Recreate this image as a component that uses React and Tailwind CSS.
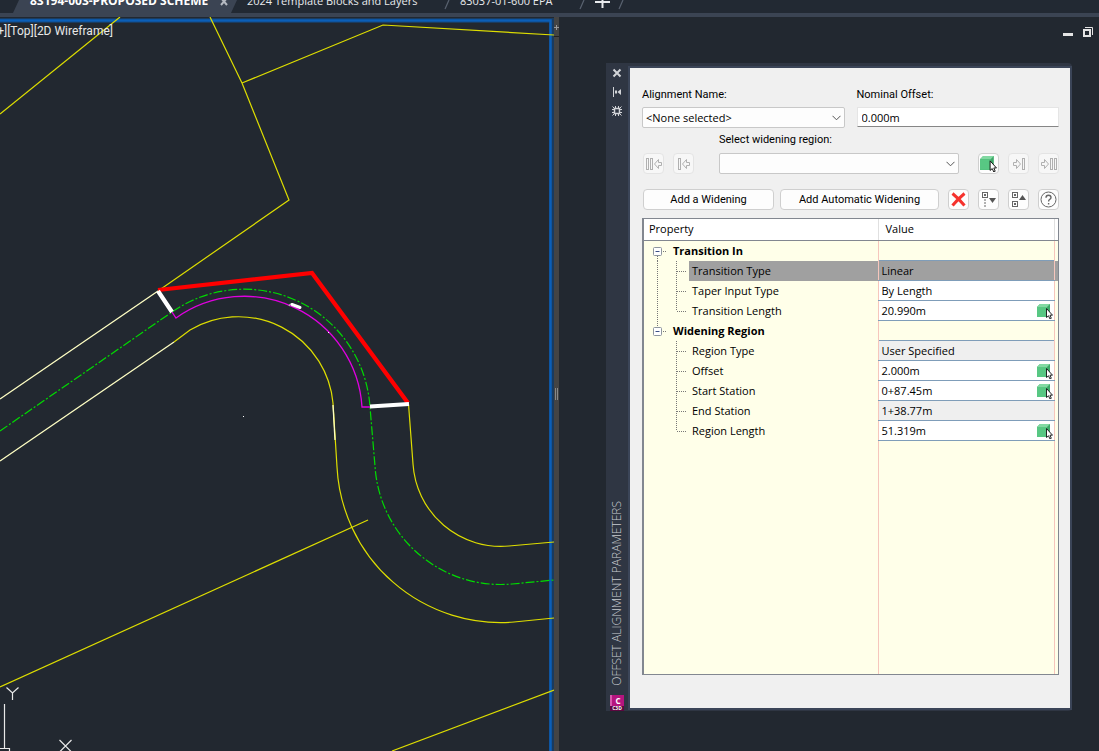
import React from "react";

const FONT = "font-['Open_Sans','Noto_Sans',sans-serif]";

function PickIcon({ className = "h-4 w-4" }) {
  return (
    <svg className={className} viewBox="0 0 16 16" aria-hidden="true">
      <path d="M0 4 L3 1 H13 V12 L10 14 H0 Z" fill="#3ea869" />
      <path d="M0 4 L3 1 H13 L10 4 Z" fill="#82d9a2" />
      <path d="M0 4 H10 V14 H0 Z" fill="#58c783" />
      <path
        d="M9.5 5.5 V14.5 L11.5 12.8 L13 16 L14.3 15.3 L13 12.2 H15.5 Z"
        fill="#fff"
        stroke="#111"
        strokeWidth="0.9"
      />
    </svg>
  );
}

function StepIcon({ bars = 1, flip = false }) {
  return (
    <svg
      className={flip ? "h-4 w-[18px] shrink-0 -scale-x-100" : "h-4 w-[18px] shrink-0"}
      viewBox="0 0 18 16"
      fill="none"
      stroke="#b0b0b0"
      aria-hidden="true"
    >
      {bars === 2 && <rect x="1.5" y="2.5" width="2" height="11" />}
      <rect x={bars === 2 ? 5.5 : 3.5} y="2.5" width="2" height="11" />
      <path
        d={
          bars === 2
            ? "M9.5 8 L13.5 3.5 V6.5 H16.5 V9.5 H13.5 V12.5 Z"
            : "M7.5 8 L11.5 3.5 V6.5 H14.5 V9.5 H11.5 V12.5 Z"
        }
      />
    </svg>
  );
}

function IconButton({ label, disabled, children }) {
  return (
    <button
      type="button"
      aria-label={label}
      disabled={disabled}
      className={
        disabled
          ? "flex h-[21px] w-[21px] shrink-0 items-center justify-center rounded border border-[#e4e4e4] bg-[#f7f7f7]"
          : "flex h-[21px] w-[21px] shrink-0 items-center justify-center rounded border border-[#cfcfcf] bg-[#fdfdfd]"
      }
    >
      {children}
    </button>
  );
}

function SelectBox({ id, options }) {
  return (
    <div className="relative flex-1">
      <select
        id={id}
        className="h-[21px] w-full appearance-none rounded-[2px] border border-[#c8c8c8] bg-[#fdfdfd] px-[3px] text-[11px] leading-4 text-black"
      >
        {options.map((o) => (
          <option key={o}>{o}</option>
        ))}
      </select>
      <svg
        className="pointer-events-none absolute top-2 right-1 h-[6px] w-[9px]"
        viewBox="0 0 9 6"
        fill="none"
        stroke="#555"
        aria-hidden="true"
      >
        <path d="M0.5 0.8 L4.5 4.8 L8.5 0.8" />
      </svg>
    </div>
  );
}

const rows = [
  { group: "Transition In", first: true },
  { name: "Transition Type", value: "Linear", selected: true },
  { name: "Taper Input Type", value: "By Length" },
  { name: "Transition Length", value: "20.990m", pick: true, last: true },
  { group: "Widening Region" },
  { name: "Region Type", value: "User Specified", locked: true, tail: true },
  { name: "Offset", value: "2.000m", pick: true, tail: true },
  { name: "Start Station", value: "0+87.45m", pick: true, tail: true },
  { name: "End Station", value: "1+38.77m", locked: true, tail: true },
  { name: "Region Length", value: "51.319m", pick: true, last: true, tail: true },
];

function TreeLines({ row }) {
  return (
    <svg
      className={row.group ? "h-5 w-[29px] shrink-0" : "h-5 w-[45px] shrink-0"}
      viewBox={row.group ? "0 0 29 20" : "0 0 45 20"}
      fill="none"
      stroke="#777"
      strokeDasharray="1 1"
      aria-hidden="true"
    >
      {row.group ? (
        <>
          {row.first ? <path d="M13.5 15 V20" /> : <path d="M13.5 0 V6" />}
          <path d="M19 10.5 H22" />
          <rect x="9.5" y="6.5" width="8" height="8" rx="1" fill="#fff" stroke="#8d959f" strokeDasharray="none" />
          <path d="M11.5 10.5 H15.5" stroke="#3b4f86" strokeDasharray="none" />
        </>
      ) : (
        <>
          {!row.tail && <path d="M13.5 0 V20" />}
          <path d={row.last ? "M32.5 0 V10" : "M32.5 0 V20"} />
          <path d="M33 10.5 H42" />
        </>
      )}
    </svg>
  );
}

function valueClass(row) {
  if (row.selected) return "border-y border-y-[#7f9db9] bg-[#a0a0a0]";
  if (row.locked) return "border-y border-y-[#7f9db9] bg-[#efefef]";
  return "border-y border-y-[#7f9db9] bg-white";
}

function PropertyTable() {
  return (
    <div className="flex flex-1 flex-col border border-l-2 border-[#828790] bg-[#ffffe9]">
      <table className="h-full w-full table-fixed border-collapse text-[11px] leading-4 text-black">
        <colgroup>
          <col />
          <col className="w-[176px]" />
          <col className="w-1" />
        </colgroup>
        <thead>
          <tr className="h-[21px] bg-white text-left">
            <th scope="col" className="border-b border-[#828790] px-[5px] font-normal">Property</th>
            <th scope="col" className="border-b border-l border-b-[#828790] border-l-[#e0e0e0] px-[7px] font-normal">Value</th>
            <td className="border-b border-l border-b-[#828790] border-l-[#e0e0e0]"></td>
          </tr>
        </thead>
        <tbody>
          {rows.map((row) => (
            <tr key={row.group || row.name} className="h-5">
              <th scope="row" className={row.group ? "p-0 text-left font-bold" : "p-0 text-left font-normal"}>
                <div className="flex h-5 items-stretch">
                  <TreeLines row={row} />
                  <span className={row.selected ? "flex flex-1 items-center bg-[#a0a0a0] pl-[3px]" : row.group ? "flex items-center" : "flex items-center pl-[3px]"}>
                    {row.group || row.name}
                  </span>
                </div>
              </th>
              {row.group ? (
                <td className="border-x border-x-[#f6c6bd] p-0"></td>
              ) : (
                <td className={"border-x border-x-[#f6c6bd] p-0 " + valueClass(row)}>
                  <div className="flex items-center justify-between pl-[3px] pr-px">
                    <span>{row.value}</span>
                    {row.pick && (
                      <button type="button" aria-label={"Pick " + row.name}>
                        <PickIcon />
                      </button>
                    )}
                  </div>
                </td>
              )}
              <td className={row.selected ? "bg-[#a0a0a0] p-0" : "p-0"}></td>
            </tr>
          ))}
          <tr>
            <td></td>
            <td className="border-x border-x-[#f6c6bd]"></td>
            <td></td>
          </tr>
        </tbody>
      </table>
    </div>
  );
}

function Drawing() {
  return (
    <svg className="block h-full w-full" fill="none" role="img" aria-label="Road alignment plan">
      <g transform="translate(0 -17)">
        <g stroke="#0b5fb8">
          <path d="M0 20.5 H551.5 V760" strokeWidth="5" opacity="0.35" />
          <path d="M0 20.5 H550.5 V760" strokeWidth="2.5" />
        </g>
        <g stroke="#dede00" strokeWidth="1.2">
          <path d="M120 17 L0 114" />
          <path d="M210 17 L242 83 L289 200 L158 291" />
          <path d="M242 83 L383 25 L554 35" />
          <path d="M174 342 L190 330 A95 95 0 0 1 333 403 L337 467 A164 164 0 0 0 514 622 L554 618" />
          <path d="M408.5 404 L413 464 A88 88 0 0 0 509 546 L554 542" />
          <path d="M0 687 L368 520" />
          <path d="M392 751 L554 690" />
        </g>
        <g stroke="#ffffc4" strokeWidth="1.3">
          <path d="M0 399 L158 291" />
          <path d="M0 461 L174 342" />
          <path d="M333 405 L335 440" />
        </g>
        <path
          d="M0 431 L172 312 A126 126 0 0 1 370 407 L375 466 A126 126 0 0 0 512 584 L554 580"
          stroke="#00dc00"
          strokeWidth="1.2"
          strokeDasharray="9 2 2 2"
        />
        <path d="M172 312 L176 318 A118 118 0 0 1 362 407 H370" stroke="#e000e0" strokeWidth="1.3" />
        <path d="M158 290 L312 273 L408 403" stroke="#fe0000" strokeWidth="4.2" />
        <path d="M158 291 L172 312 M370 406.5 L409 404" stroke="#fff" strokeWidth="4.2" />
        <path d="M289 306 Q290 303 293 304" stroke="#bbb" strokeWidth="1.2" />
        <path d="M292 304.5 L300 307.5" stroke="#fff" strokeWidth="3" strokeLinecap="round" />
        <path d="M243 416.5 H244 M328 332.5 H329" stroke="#fff" />
        <g stroke="#e8e8e8" strokeWidth="1.2">
          <path d="M4.5 704 V748 M0 748.5 H9.5 V752" />
          <path d="M6.5 687.5 L12.5 693 L18.5 687.5 M12.5 693 V700" />
          <path d="M59.5 740 L71.5 752 M71.5 740 L59.5 752" />
        </g>
      </g>
    </svg>
  );
}

function TabDivider() {
  return (
    <svg className="h-[13px] w-2 shrink-0" viewBox="0 0 8 13" aria-hidden="true">
      <path d="M1 9 L5 0" stroke="#5a6371" strokeWidth="1.2" />
    </svg>
  );
}

function FileTabs() {
  return (
    <nav className="flex h-[17px] shrink-0 items-start overflow-hidden border-b-4 border-[#3b4453] bg-[#222933] text-[11px] leading-4 whitespace-nowrap text-[#e8eaed]">
      <svg className="h-[13px] w-5 shrink-0" viewBox="0 0 20 13" aria-hidden="true">
        <path d="M13 13 L19 0 H20 V13 Z" fill="#3b4453" />
      </svg>
      <div className="flex h-[13px] w-[210px] shrink-0 items-end gap-3 bg-[#3b4453] pl-[10px]">
        <a href="#scheme" className="mb-1 text-[12px] font-bold text-white">83194-003-PROPOSED SCHEME</a>
        <button type="button" aria-label="Close tab" className="mb-[7px]">
          <svg className="h-2 w-2" viewBox="0 0 8 8" stroke="#b5bac2" strokeWidth="2" aria-hidden="true">
            <path d="M1 0 L7 7 M7 0 L1 7" />
          </svg>
        </button>
      </div>
      <svg className="h-[13px] w-[17px] shrink-0" viewBox="0 0 17 13" aria-hidden="true">
        <path d="M0 0 H7 L1 13 H0 Z" fill="#3b4453" />
      </svg>
      <div className="flex h-[13px] w-[197px] shrink-0 items-end">
        <a href="#template" className="mb-1">2024 Template Blocks and Layers</a>
      </div>
      <TabDivider />
      <div className="flex h-[13px] w-[127px] shrink-0 items-end pl-2">
        <a href="#epa" className="mb-1">83037-01-600 EPA</a>
      </div>
      <TabDivider />
      <button type="button" aria-label="New tab" className="mx-2 shrink-0">
        <svg className="h-[13px] w-[15px]" viewBox="0 0 15 13" stroke="#e8eaed" strokeWidth="2" aria-hidden="true">
          <path d="M0 2 H15 M7.5 0 V8" />
        </svg>
      </button>
      <TabDivider />
    </nav>
  );
}

function PaletteBar() {
  return (
    <div className="flex w-[22px] shrink-0 flex-col items-center bg-[#2f3643] pt-[5px]">
      <div className="flex flex-1 flex-col items-center gap-[9px]">
        <button type="button" aria-label="Close palette">
          <svg className="h-[10px] w-[10px]" viewBox="0 0 10 10" stroke="#d2d4d8" strokeWidth="2" aria-hidden="true">
            <path d="M1.5 1.5 L8.5 8.5 M8.5 1.5 L1.5 8.5" />
          </svg>
        </button>
        <button type="button" aria-label="Auto-hide">
          <svg className="h-[10px] w-[10px]" viewBox="0 0 10 10" fill="#d2d4d8" aria-hidden="true">
            <path d="M1 0 H2 V10 H1 Z M3 3.5 H5 V6.5 H3 Z M9 2 V8 L5.5 5 Z" />
          </svg>
        </button>
        <button type="button" aria-label="Palette settings">
          <svg className="h-[10px] w-[10px]" viewBox="0 0 10 10" fill="none" stroke="#d2d4d8" strokeWidth="1.5" aria-hidden="true">
            <rect x="2.5" y="2.5" width="5" height="5" />
            <path d="M3.5 0 V2 M6.5 0 V2 M3.5 8 V10 M6.5 8 V10 M0 3.5 H2 M0 6.5 H2 M8 3.5 H10 M8 6.5 H10 M0.5 0.5 L2.5 2.5 M9.5 0.5 L7.5 2.5 M0.5 9.5 L2.5 7.5 M9.5 9.5 L7.5 7.5" strokeWidth="1" />
          </svg>
        </button>
      </div>
      <h2 className="rotate-180 text-[12px] leading-4 font-light whitespace-nowrap text-[#c9ccd1] [writing-mode:vertical-rl]">
        OFFSET ALIGNMENT PARAMETERS
      </h2>
      <div className="mt-[9px] flex h-4 w-[14px] flex-col items-center border-l-2 border-[#d658ad] bg-[#b5157f]">
        <span className="text-[8px] leading-[11px] font-bold text-white">C</span>
        <span className="-ml-[2px] w-[14px] bg-[#5d0740] text-center text-[5px] leading-[5px] font-bold text-white">C3D</span>
      </div>
    </div>
  );
}

function Palette() {
  return (
    <section className="flex h-[648px] w-[466px] rounded-sm bg-[#2f3643]">
      <PaletteBar />
      <div className="mt-[3px] mb-px flex flex-1 flex-col border-2 border-[#3b4558] bg-[#f0f0f0] pr-[11px] pb-[33px] pl-3 text-[11px] leading-4 text-black">
        <div className="flex gap-3 pt-[19px]">
          <div className="flex flex-1 flex-col gap-1">
            <label htmlFor="alignment-name" className="font-[Roboto,sans-serif]">Alignment Name:</label>
            <SelectBox id="alignment-name" options={["<None selected>"]} />
          </div>
          <div className="flex flex-1 flex-col gap-1">
            <label htmlFor="nominal-offset" className="font-[Roboto,sans-serif]">Nominal Offset:</label>
            <input
              id="nominal-offset"
              defaultValue="0.000m"
              className="h-5 w-full rounded-[1px] border border-[#e5e5e5] border-b-[#868686] bg-white px-1 text-[11px] leading-4"
            />
          </div>
        </div>
        <label htmlFor="region" className="mt-1 ml-[77px] font-[Roboto,sans-serif]">Select widening region:</label>
        <div className="mt-[5px] flex items-center gap-[9px] pl-px">
          <IconButton label="First region" disabled><StepIcon bars={2} /></IconButton>
          <IconButton label="Previous region" disabled><StepIcon /></IconButton>
          <div className="mr-[10px] ml-4 flex flex-1">
            <SelectBox id="region" options={[""]} />
          </div>
          <IconButton label="Pick region"><PickIcon className="h-[17px] w-[17px] shrink-0" /></IconButton>
          <IconButton label="Next region" disabled><StepIcon flip /></IconButton>
          <IconButton label="Last region" disabled><StepIcon bars={2} flip /></IconButton>
        </div>
        <div className="mt-[15px] flex items-center gap-[9px] pl-px">
          <div className="flex flex-1 gap-[6px] font-[Roboto,sans-serif]">
            <button type="button" className="h-[21px] w-[131px] rounded border border-[#cfcfcf] bg-[#fdfdfd]">Add a Widening</button>
            <button type="button" className="h-[21px] flex-1 rounded border border-[#cfcfcf] bg-[#fdfdfd]">Add Automatic Widening</button>
          </div>
          <IconButton label="Delete">
            <svg className="h-[15px] w-[15px] shrink-0" viewBox="0 0 15 15" stroke="#f5322d" strokeWidth="3" aria-hidden="true">
              <path d="M1.5 1.5 Q7 6 13.5 13.5 M13.5 1.5 Q8 6 1.5 13.5" fill="none" />
            </svg>
          </IconButton>
          <IconButton label="Collapse all">
            <svg className="h-[17px] w-[17px] shrink-0" viewBox="0 0 17 17" fill="none" stroke="#666" aria-hidden="true">
              <rect x="2.5" y="1.5" width="5" height="5" />
              <path d="M4 4 H6" strokeWidth="2" />
              <path d="M5 8 V16" strokeDasharray="2 1" />
              <path d="M9 7 H16 L12.5 12 Z" fill="#555" stroke="none" />
            </svg>
          </IconButton>
          <IconButton label="Expand all">
            <svg className="h-[17px] w-[17px] shrink-0" viewBox="0 0 17 17" fill="none" stroke="#666" aria-hidden="true">
              <rect x="2.5" y="1.5" width="5" height="5" />
              <rect x="2.5" y="10.5" width="5" height="5" />
              <path d="M4 4 H6 M4 13 H6" strokeWidth="2" />
              <path d="M9 9 H16 L12.5 4 Z" fill="#555" stroke="none" />
            </svg>
          </IconButton>
          <IconButton label="Help">
            <svg className="h-[17px] w-[17px] shrink-0" viewBox="0 0 17 17" fill="none" stroke="#666" aria-hidden="true">
              <circle cx="8.5" cy="8.5" r="7.5" />
              <path d="M6 6.8 Q6 4.3 8.5 4.3 Q11 4.3 11 6.5 Q11 7.6 9.6 8.5 Q8.6 9.2 8.6 10.5 M8.6 12 V13.5" strokeWidth="1.4" />
            </svg>
          </IconButton>
        </div>
        <div className="mt-2 flex flex-1">
          <PropertyTable />
        </div>
      </div>
    </section>
  );
}

export default function App() {
  return (
    <div className={"flex h-screen flex-col overflow-hidden bg-[#222830] " + FONT}>
      <FileTabs />
      <main className="flex min-h-0 flex-1">
        <div className="relative min-w-0 flex-1 overflow-hidden">
          <Drawing />
          <p className="absolute top-[6px] -left-[6px] font-[Roboto,sans-serif] text-[12px] leading-4 whitespace-nowrap text-[#e8e8e8]">
            [+][Top][2D Wireframe]
          </p>
        </div>
        <div className="flex w-[5px] shrink-0 flex-col items-center bg-[#444]">
          <svg className="h-5 w-[5px]" viewBox="0 0 5 20" stroke="#999" aria-hidden="true">
            <path d="M0 10.5 H5 M2.5 8 V13" />
            <path d="M0 19.5 H5" stroke="#222" />
          </svg>
          <div className="flex flex-1 items-center">
            <svg className="h-3 w-[5px]" viewBox="0 0 5 12" stroke="#888" aria-hidden="true">
              <path d="M1.5 0 V12 M3.5 0 V12" />
            </svg>
          </div>
        </div>
        <div className="flex w-[540px] shrink-0 flex-col pl-[47px]">
          <div className="flex h-[46px] items-start justify-end gap-[10px] pt-[10px] pr-[6px]">
            <button type="button" aria-label="Minimize" className="pt-[6px]">
              <svg className="h-[3px] w-[10px]" viewBox="0 0 10 3" aria-hidden="true">
                <path d="M0 0 H10 V3 H0 Z" fill="#e4e4e4" />
              </svg>
            </button>
            <button type="button" aria-label="Restore">
              <svg className="h-[10px] w-[10px]" viewBox="0 0 10 10" fill="none" stroke="#e4e4e4" aria-hidden="true">
                <path d="M2 0.5 H9.5 V8" />
                <rect x="1" y="3" width="6" height="6" strokeWidth="2" />
              </svg>
            </button>
          </div>
          <Palette />
        </div>
      </main>
    </div>
  );
}
